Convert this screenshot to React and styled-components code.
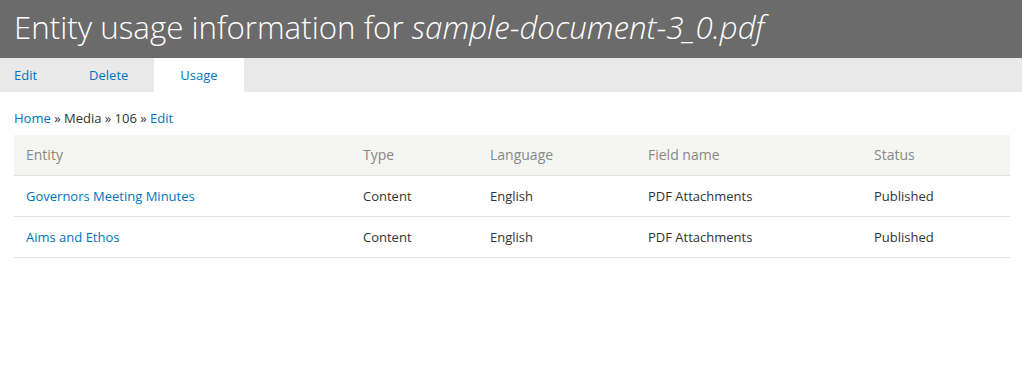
import React from 'react';
import styled, { createGlobalStyle } from 'styled-components';

const GlobalStyle = createGlobalStyle`
  body {
    margin: 0;
    background: #fff;
    font-family: "Open Sans", "Liberation Sans", sans-serif;
    color: #333;
  }
`;

const Header = styled.div`
  background-color: #6b6b6b;
  height: 58px;
  padding: 0 14px;
  display: flex;
  align-items: center;
`;

const Title = styled.h1`
  margin: 0 0 2px;
  color: #fff;
  font-weight: 300;
  font-size: 31.3px;
  line-height: 1;
  em {
    font-style: italic;
  }
`;

const Tabs = styled.div`
  display: flex;
  height: 34px;
  background-color: #e9e9e9;
`;

const Tab = styled.a`
  display: flex;
  align-items: center;
  padding: 0 26px 0 ${({ first }) => (first ? '14px' : '26px')};
  font-size: 13px;
  color: #0074bd;
  text-decoration: none;
  background-color: ${({ active }) => (active ? '#fff' : 'transparent')};
`;

const Main = styled.div`
  padding: 17px 12px 0 14px;
`;

const Breadcrumb = styled.div`
  font-size: 13px;
  line-height: 18px;
  color: #333;
  margin-bottom: 8px;
  a {
    color: #0074bd;
    text-decoration: none;
  }
`;

const Table = styled.table`
  width: 100%;
  table-layout: fixed;
  border-collapse: collapse;
  font-size: 13px;
`;

const Th = styled.th`
  box-sizing: border-box;
  text-align: left;
  font-weight: 400;
  font-size: 14px;
  color: #888;
  background-color: #f5f5f2;
  height: 40px;
  padding: 0 12px;
  border-bottom: 1px solid #e2e2de;
  width: ${({ w }) => w || 'auto'};
`;

const Td = styled.td`
  height: 40px;
  padding: 0 12px;
  border-bottom: 1px solid #e2e2de;
  color: #333;
  a {
    color: #0074bd;
    text-decoration: none;
  }
`;

const rows = [
  { entity: 'Governors Meeting Minutes', type: 'Content', lang: 'English', field: 'PDF Attachments', status: 'Published' },
  { entity: 'Aims and Ethos', type: 'Content', lang: 'English', field: 'PDF Attachments', status: 'Published' },
];

export default function App() {
  return (
    <>
      <GlobalStyle />
      <Header>
        <Title>
          Entity usage information for <em>sample-document-3_0.pdf</em>
        </Title>
      </Header>
      <Tabs>
        <Tab first href="#">Edit</Tab>
        <Tab href="#">Delete</Tab>
        <Tab active href="#">Usage</Tab>
      </Tabs>
      <Main>
        <Breadcrumb>
          <a href="#">Home</a> » Media » 106 » <a href="#">Edit</a>
        </Breadcrumb>
        <Table>
          <thead>
            <tr>
              <Th w="337px">Entity</Th>
              <Th w="127px">Type</Th>
              <Th w="158px">Language</Th>
              <Th w="226px">Field name</Th>
              <Th>Status</Th>
            </tr>
          </thead>
          <tbody>
            {rows.map((r) => (
              <tr key={r.entity}>
                <Td><a href="#">{r.entity}</a></Td>
                <Td>{r.type}</Td>
                <Td>{r.lang}</Td>
                <Td>{r.field}</Td>
                <Td>{r.status}</Td>
              </tr>
            ))}
          </tbody>
        </Table>
      </Main>
    </>
  );
}
